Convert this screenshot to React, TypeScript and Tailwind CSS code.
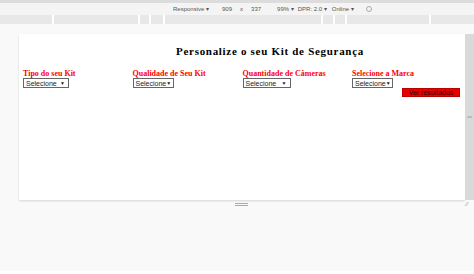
const serif = { fontFamily: '"Liberation Serif", "Times New Roman", serif' };
const sans = { fontFamily: '"Liberation Sans", Arial, sans-serif' };

// réguas do topo (larguras aproximadas dos segmentos)
const rulerSegments = [52, 84, 9, 12, 156, 10, 10, 82, 43];

const campos = [
  { label: 'Tipo do seu Kit', width: 'w-[46px]' },
  { label: 'Qualidade de Seu Kit', width: 'w-[41px]' },
  { label: 'Quantidade de Câmeras', width: 'w-[48px]' },
  { label: 'Selecione a Marca', width: 'w-[41px]' },
];

function FakeSelect({ width }: { width: string }) {
  return (
    <div
      className={`${width} h-[10px] flex items-center justify-between border border-[#666] bg-white pl-[2px] pr-[3px] text-[7px] leading-none text-[#222]`}
      style={sans}
    >
      <span>Selecione</span>
      <span className="text-[5px]">▼</span>
    </div>
  );
}

export default function App() {
  return (
    <div className="w-[474px] h-[274px] bg-[#f9f9f9] overflow-hidden flex flex-col" style={sans}>
      <div className="h-[3px] bg-[#dcdcdc]" />

      {/* barra de dispositivos */}
      <div className="h-[12px] bg-[#f4f4f4] flex items-center text-[6px] text-[#555] leading-none">
        <span className="ml-[173px]">Responsive ▾</span>
        <span className="ml-[13px]">909</span>
        <span className="ml-[8px]">x</span>
        <span className="ml-[8px]">337</span>
        <span className="ml-[16px]">99% ▾</span>
        <span className="ml-[4px]">DPR: 2.0 ▾</span>
        <span className="ml-[5px]">Online ▾</span>
        <span className="ml-[12px] w-[6px] h-[6px] rounded-full border border-[#aaa]" />
      </div>

      {/* réguas */}
      <div className="h-[9px] flex gap-[2px] bg-white">
        {rulerSegments.map((w, i) => (
          <div key={i} className="h-full bg-[#e8e8e8]" style={{ width: w }} />
        ))}
      </div>

      <div className="h-[10px]" />

      <div className="flex">
        <div className="ml-[19px] w-[446px] h-[166px] bg-white shadow-[0_1px_2px_rgba(0,0,0,0.15)]" style={serif}>
          <h1 className="pl-[56px] pt-[12px] text-center text-[11px] tracking-[0.7px] font-bold leading-none text-black">
            Personalize o seu Kit de Segurança
          </h1>

          <div className="mt-[12px] pl-[4px] grid grid-cols-[109.5px_110px_109.5px_100px]">
            {campos.map((c) => (
              <div key={c.label} className="flex flex-col">
                <label className="text-[8px] font-bold text-[#ff0000] leading-[9px]">{c.label}</label>
                <FakeSelect width={c.width} />
              </div>
            ))}
          </div>

          <div className="flex justify-end pr-[5px]">
            <button
              className="w-[58px] h-[9px] bg-[#e60000] border border-[#b00] text-[7px] leading-none text-[#300]"
              style={sans}
            >
              Ver resultados
            </button>
          </div>
        </div>

        {/* barra lateral de redimensionar */}
        <div className="w-[9px] h-[166px] bg-[#d9d9d9] flex items-center justify-center">
          <span className="text-[8px] text-[#777] leading-none">⇔</span>
        </div>
      </div>

      <div className="relative h-[8px]">
        <div className="absolute left-[235px] top-[3px] w-[13px] h-[3px] border-y border-[#aaa]" />
        <div className="absolute left-[466px] top-[1px] text-[6px] text-[#999] leading-none">⁄⁄</div>
      </div>

      <div className="flex-1" />
      <div className="h-[3px] bg-white" />
    </div>
  );
}
